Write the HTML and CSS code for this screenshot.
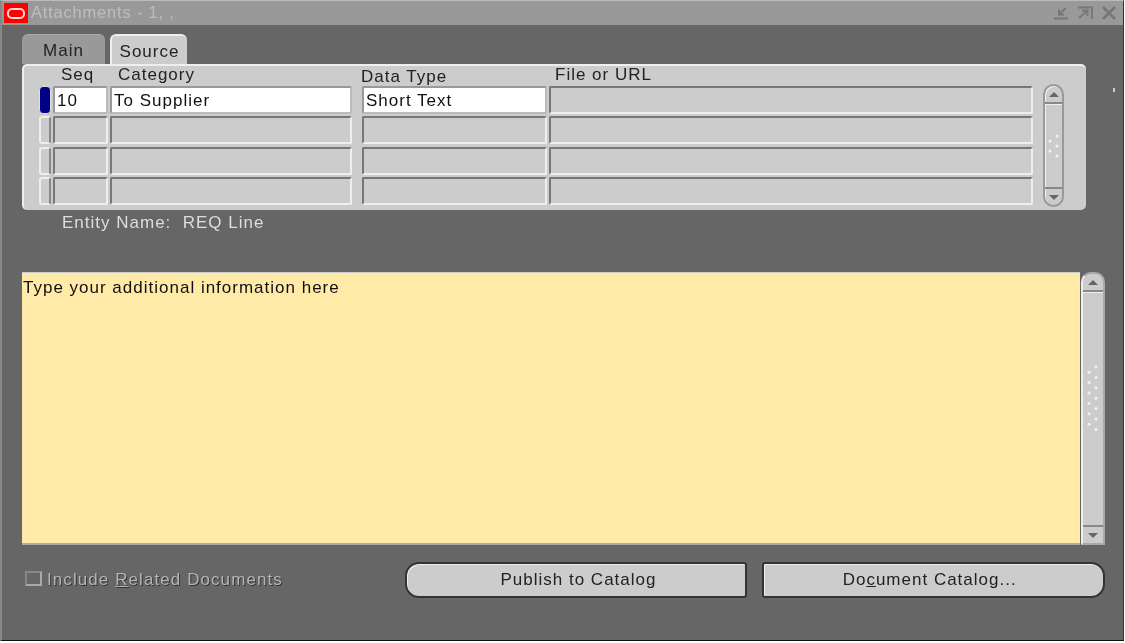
FILE: index.html
```html
<!DOCTYPE html>
<html lang="en">
<head>
<meta charset="utf-8">
<title>Attachments</title>
<link rel="stylesheet" href="styles.css">
</head>
<body>
<div class="window">
  <header class="titlebar">
    <span class="logo"><span class="logo-o"></span></span>
    <span class="title">Attachments - 1, ,</span>
    <span class="win-icons">
      <svg width="15" height="14" viewBox="0 0 15 14"><path d="M0 12.5H14M12 2L5 8M5 3.5V8.5H10" fill="none" stroke="#777" stroke-width="2"/></svg>
      <svg width="16" height="14" viewBox="0 0 16 14"><path d="M1 1.5H15V13M2 12L10 5M5 4.5H10.5V10" fill="none" stroke="#777" stroke-width="2"/></svg>
      <svg width="16" height="14" viewBox="0 0 16 14"><path d="M2 1L14 13M14 1L2 13" fill="none" stroke="#777" stroke-width="2.6"/></svg>
    </span>
  </header>
  <main class="content">
    <span class="speck"></span>
    <nav class="tabs">
      <span class="tab tab-off">Main</span>
      <span class="tab tab-on">Source</span>
    </nav>
    <section class="panel">
      <div class="table">
        <div class="heads">
          <span></span>
          <span class="h-seq">Seq</span>
          <span class="h-cat">Category</span>
          <span class="h-type">Data Type</span>
          <span class="h-file">File or URL</span>
        </div>
        <div class="rows">
          <span class="ind ind-on"></span><span class="fld on">10</span><span class="fld on">To Supplier</span><span class="fld on type">Short Text</span><span class="fld"></span>
          <span class="ind"></span><span class="fld"></span><span class="fld"></span><span class="fld type"></span><span class="fld"></span>
          <span class="ind"></span><span class="fld"></span><span class="fld"></span><span class="fld type"></span><span class="fld"></span>
          <span class="ind"></span><span class="fld"></span><span class="fld"></span><span class="fld type"></span><span class="fld"></span>
        </div>
      </div>
      <div class="vbar small">
        <span class="vbtn up"><svg width="12" height="7" viewBox="0 0 12 7"><path d="M6 1L11 6H1Z" fill="#666"/></svg></span>
        <span class="vtrack"><svg width="12" height="24" viewBox="0 0 12 24" fill="#f2f2f2"><circle cx="9" cy="2" r="1.5"/><circle cx="2" cy="7" r="1.5"/><circle cx="9" cy="12" r="1.5"/><circle cx="2" cy="17" r="1.5"/><circle cx="9" cy="22" r="1.5"/></svg></span>
        <span class="vbtn down"><svg width="12" height="7" viewBox="0 0 12 7"><path d="M1 1H11L6 6Z" fill="#666"/></svg></span>
      </div>
    </section>
    <p class="entity">Entity Name:&nbsp; REQ Line</p>
    <section class="memo">
      <div class="memo-text">Type your additional information here</div>
      <div class="vbar large">
        <span class="vbtn up"><svg width="12" height="7" viewBox="0 0 12 7"><path d="M6 1L11 6H1Z" fill="#666"/></svg></span>
        <span class="vtrack"><svg width="12" height="68" viewBox="0 0 12 68" fill="#f2f2f2"><circle cx="9" cy="2" r="1.5"/><circle cx="2" cy="7.2" r="1.5"/><circle cx="9" cy="12.4" r="1.5"/><circle cx="2" cy="17.6" r="1.5"/><circle cx="9" cy="22.8" r="1.5"/><circle cx="2" cy="28" r="1.5"/><circle cx="9" cy="33.2" r="1.5"/><circle cx="2" cy="38.4" r="1.5"/><circle cx="9" cy="43.6" r="1.5"/><circle cx="2" cy="48.8" r="1.5"/><circle cx="9" cy="54" r="1.5"/><circle cx="2" cy="59.2" r="1.5"/><circle cx="9" cy="64.4" r="1.5"/></svg></span>
        <span class="vbtn down"><svg width="12" height="7" viewBox="0 0 12 7"><path d="M1 1H11L6 6Z" fill="#666"/></svg></span>
      </div>
    </section>
    <footer class="actions">
      <label class="check"><span class="box"></span><span class="check-text">Include <u>R</u>elated Documents</span></label>
      <button class="btn btn-left">Publish to Catalog</button>
      <button class="btn btn-right">Do<u>c</u>ument Catalog...</button>
    </footer>
  </main>
</div>
</body>
</html>
```
FILE: styles.css
```css
* { box-sizing: border-box; }
html, body { margin: 0; background: #fff; }
body { width: 1125px; height: 643px; overflow: hidden; font-family: "Liberation Sans", Arial, sans-serif; font-size: 17px; letter-spacing: 1px; color: #222; }

.window { width: 1124px; height: 641px; background: #666; border-left: 2px solid #888; border-top: 1px solid #bbb; border-right: 1px solid #333; border-bottom: 1px solid #111; display: flex; flex-direction: column; filter: blur(0.3px); }

.titlebar { height: 24px; background: #999; display: flex; align-items: center; padding-left: 2px; flex: none; }
.logo { width: 24px; height: 20px; background: #f00; display: flex; align-items: center; justify-content: center; flex: none; }
.logo-o { width: 18px; height: 11px; border: 2.5px solid #fdd; border-radius: 5px; }
.title { margin-left: 3px; margin-bottom: 2px; color: #bdbdbd; letter-spacing: 0.8px; font-size: 16.5px; }
.win-icons { margin-left: auto; margin-right: 6px; display: flex; gap: 8px; }

.content { position: relative; flex: 1; padding: 9px 18px 0 20px; }
.speck { position: absolute; left: 1111px; top: 63px; width: 2px; height: 4px; background: #ccc; }

.tabs { display: flex; height: 30px; gap: 5px; align-items: stretch; }
.tab { display: flex; align-items: center; justify-content: center; height: 30px; border-radius: 6px 6px 0 0; padding-top: 3px; }
.tab-off { width: 83px; background: #999; color: #222; border-top: 1px solid #aaa; }
.tab-on { width: 77px; background: #ccc; border-top: 2px solid #eee; border-left: 2px solid #eee; }

.panel { width: 1064px; height: 146px; background: #ccc; border-top: 2px solid #eee; border-left: 2px solid #eee; border-radius: 5px; padding: 0 0 0 15px; display: flex; gap: 10px; }
.table { width: 994px; }
.heads, .rows { display: grid; grid-template-columns: 12px 55px 242px 193px 484px; column-gap: 2px; }
.heads { grid-template-rows: 14px; height: 14px; line-height: 14px; margin-top: 2px; margin-bottom: 4px; }
.h-seq { padding-left: 8px; }
.h-cat { padding-left: 8px; }
.h-type { padding-left: 9px; margin-left: -2px; margin-top: 2px; }
.h-file { padding-left: 6px; }
.rows { grid-auto-rows: 28px; row-gap: 2.33px; }

.fld { display: flex; align-items: center; padding: 1px 0 0 2px; background: #ccc; border-top: 2px solid #777; border-left: 2px solid #777; border-right: 2px solid #eee; border-bottom: 2px solid #eee; border-radius: 2px; color: #111; }
.fld.on { background: #fff; border-top-color: #999; border-left-color: #999; border-right-color: #bbb; border-bottom-color: #bbb; }
.fld.type { margin-left: 8px; }

.ind { border: 2px solid #eee; border-right-color: #888; background: #ccc; border-radius: 3px; }
.ind-on { background: #008; border: 1px solid #ddd; border-radius: 4px; }

.vbar { display: flex; flex-direction: column; border: 2px solid #999; background: #ccc; }
.vbar.small { width: 21px; height: 123px; margin-top: 18px; border-radius: 11px; box-shadow: inset 1px 1px #eee; }
.vbtn { height: 18px; display: flex; align-items: center; justify-content: center; flex: none; }
.vbtn.up { border-bottom: 2px solid #888; box-shadow: 0 1px #eee; }
.vbtn.down { border-top: 2px solid #888; }
.vtrack { flex: 1; display: flex; align-items: center; justify-content: center; }
.large .vtrack { padding-bottom: 20px; }

.entity { margin: 0; height: 62px; padding: 3px 0 0 40px; color: #ddd; }

.memo { display: flex; height: 273px; width: 1083px; }
.memo-text { width: 1059px; background: #ffeaa8; border-top: 1px solid #ccc; border-bottom: 2px solid #aaa; padding: 5px 0 0 1px; color: #111; }
.vbar.large { width: 24px; margin-left: 1px; border-radius: 10px 10px 0 0; border-color: #aaa; border-left-color: #eee; }

.actions { display: flex; align-items: center; margin-top: 17px; height: 36px; }
.check { display: flex; align-items: center; width: 383px; padding-left: 3px; color: #b5b5b5; text-shadow: 1px 1px #333; }
.box { width: 17px; height: 15px; border: 2px solid #888; border-right-color: #aaa; border-bottom-color: #aaa; margin-right: 5px; margin-top: -3px; }
.check-text { letter-spacing: 1.08px; }
.btn { font: inherit; letter-spacing: inherit; color: #222; height: 36px; width: 343px; background: #ccc; border: 2px solid #333; box-shadow: inset 1px 1px #eee; padding: 0; }
.btn-left { border-radius: 14px 3px 3px 14px; padding-left: 5px; }
.btn-right { margin-left: 15px; border-radius: 3px 14px 14px 3px; padding-right: 8px; }
```
